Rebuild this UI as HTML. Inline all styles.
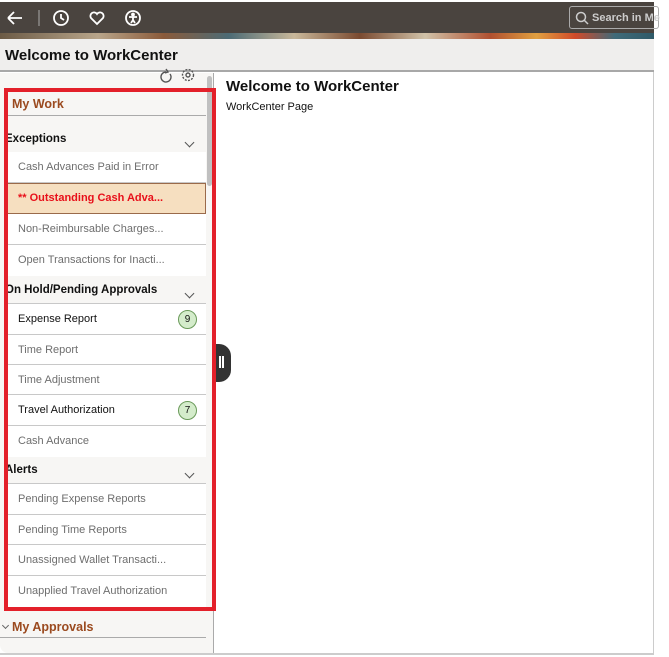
<!DOCTYPE html>
<html><head><style>
*{margin:0;padding:0;box-sizing:border-box}
body{width:669px;height:657px;background:#fff;font-family:"Liberation Sans",Arial,sans-serif;position:relative;overflow:hidden}
.top{position:absolute;left:0;top:2px;width:654px;height:31px;background:#4a443f}
.banner{position:absolute;left:0;top:33px;width:654px;height:6px;background:linear-gradient(90deg,#6b5a45,#b8a58a 15%,#8a5a3a 25%,#4c6b75 35%,#c9b89a 45%,#7a4a30 55%,#d0c2a8 65%,#b05030 75%,#e0a040 82%,#d04a2a 88%,#3f6a78 94%,#2f5a68)}
.title{position:absolute;left:0;top:39px;width:654px;height:33px;background:#efeeed;border-bottom:2px solid #a8a8a8}
.title span{position:absolute;left:5px;top:8px;font-size:15px;font-weight:bold;color:#111}
.left{position:absolute;left:0;top:73px;width:214px;height:580px;background:#f7f6f4;border-right:1px solid #aaa;border-bottom-left-radius:8px}
.rightedge{position:absolute;left:653px;top:72px;width:1px;height:583px;background:#ccc}
.bottom{position:absolute;left:0;top:653px;width:654px;height:2px;background:#ccc}
.t{position:absolute;font-size:12px;white-space:nowrap}
.row{position:absolute;left:5px;width:201px;height:31px;background:#fff;border-bottom:1px solid #c8c8c8}
.row span{position:absolute;left:13px;top:9px;font-size:11px;color:#6e6e6e}
.row.dk span{color:#111}
.hdr{position:absolute;left:5px;font-size:11.5px;font-weight:bold;color:#111}
.chev{position:absolute;left:186px;width:7px;height:7px;border-right:1.3px solid #555;border-bottom:1.3px solid #555;transform:rotate(45deg)}
.badge{position:absolute;left:173px;top:6px;width:19px;height:19px;border-radius:50%;background:#d4eccb;border:1px solid #6a9a5a;font-size:10px;text-align:center;line-height:17px;color:#111}
.red{position:absolute;left:4px;top:88px;width:212px;height:523px;border:4px solid #e3202a}
</style></head><body>
<div class="top">
<svg width="160" height="31" style="position:absolute;left:0;top:0" fill="none" stroke="#fff" stroke-width="1.8">
<path d="M8 16h14M8 16l6-6M8 16l6 6"/>
<line x1="39" y1="8" x2="39" y2="24" stroke="#aaa" stroke-width="1"/>
<circle cx="61" cy="16" r="7"/><path d="M61 12v4l3 2"/>
<path d="M97 22l-6-6a3.5 3.5 0 0 1 6-4a3.5 3.5 0 0 1 6 4z"/>
<circle cx="133" cy="16" r="7"/><circle cx="133" cy="12.5" r="1" fill="#fff"/><path d="M129 15h8M133 15v3l-2 3M133 18l2 3"/>
</svg>
<div style="position:absolute;left:569px;top:4px;width:90px;height:23px;border:1px solid #aaa;border-radius:3px"></div>
<svg width="14" height="14" style="position:absolute;left:575px;top:9px" fill="none" stroke="#ccc" stroke-width="1.5"><circle cx="6" cy="6" r="4.5"/><path d="M9 9l4 4"/></svg>
<span class="t" style="left:592px;top:10px;color:#ccc;font-size:11px;font-weight:bold">Search in Me</span>
</div>
<div class="banner"></div>
<div class="title"><span>Welcome to WorkCenter</span></div>
<div class="left"></div>
<div class="rightedge"></div><div class="bottom"></div>
<svg width="40" height="16" style="position:absolute;left:156px;top:68px" fill="none" stroke="#555" stroke-width="1.4">
<path d="M14 6a5 5 0 1 1-4-2"/><path d="M10 1l2 3-3 1"/>
<circle cx="32" cy="7" r="5.5" stroke-dasharray="2 1.3"/><circle cx="32" cy="7" r="2"/>
</svg>
<div style="position:absolute;left:207px;top:76px;width:5px;height:110px;background:#c0c0c0;border-radius:3px"></div>
<div style="position:absolute;left:215px;top:344px;width:16px;height:38px;background:#333;border-radius:0 12px 12px 0"></div>
<div style="position:absolute;left:219px;top:356px;width:1.5px;height:12px;background:#fff"></div>
<div style="position:absolute;left:222px;top:356px;width:1.5px;height:12px;background:#fff"></div>

<span class="t" style="left:12px;top:97px;font-size:12.5px;font-weight:bold;color:#9b4a1f">My Work</span>
<div style="position:absolute;left:5px;top:115px;width:201px;height:1px;background:#aaa"></div>

<span class="hdr" style="top:133px">Exceptions</span><div class="chev" style="top:139px"></div>
<div class="row" style="top:152px"><span>Cash Advances Paid in Error</span></div>
<div class="row" style="top:183px;background:#f6dfc0;border:1px solid #9a6a4a"><span style="color:#e8101a;font-weight:bold;left:12px;top:8px">** Outstanding Cash Adva...</span></div>
<div class="row" style="top:214px"><span>Non-Reimbursable Charges...</span></div>
<div class="row" style="top:245px;border-bottom:none"><span>Open Transactions for Inacti...</span></div>

<span class="hdr" style="top:284px">On Hold/Pending Approvals</span><div class="chev" style="top:290px"></div>
<div style="position:absolute;left:5px;top:303px;width:201px;height:1px;background:#c8c8c8"></div>
<div class="row dk" style="top:304px"><span>Expense Report</span><div class="badge">9</div></div>
<div class="row" style="top:335px;height:30px"><span>Time Report</span></div>
<div class="row" style="top:365px;height:30px"><span>Time Adjustment</span></div>
<div class="row dk" style="top:395px"><span>Travel Authorization</span><div class="badge">7</div></div>
<div class="row" style="top:426px;border-bottom:none"><span>Cash Advance</span></div>

<span class="hdr" style="top:464px">Alerts</span><div class="chev" style="top:470px"></div>
<div style="position:absolute;left:5px;top:483px;width:201px;height:1px;background:#c8c8c8"></div>
<div class="row" style="top:484px"><span>Pending Expense Reports</span></div>
<div class="row" style="top:515px;height:30px"><span>Pending Time Reports</span></div>
<div class="row" style="top:545px"><span>Unassigned Wallet Transacti...</span></div>
<div class="row" style="top:576px;border-bottom:none"><span>Unapplied Travel Authorization</span></div>

<div style="position:absolute;left:3px;top:623px;width:5px;height:5px;border-right:1px solid #666;border-bottom:1px solid #666;transform:rotate(45deg)"></div>
<span class="t" style="left:12px;top:620px;font-size:12.5px;font-weight:bold;color:#9b4a1f">My Approvals</span>
<div style="position:absolute;left:0;top:637px;width:206px;height:1px;background:#aaa"></div>

<div class="red"></div>

<span class="t" style="left:226px;top:78px;font-size:15px;font-weight:bold;color:#111">Welcome to WorkCenter</span>
<span class="t" style="left:226px;top:101px;font-size:11px;color:#111">WorkCenter Page</span>
</body></html>
